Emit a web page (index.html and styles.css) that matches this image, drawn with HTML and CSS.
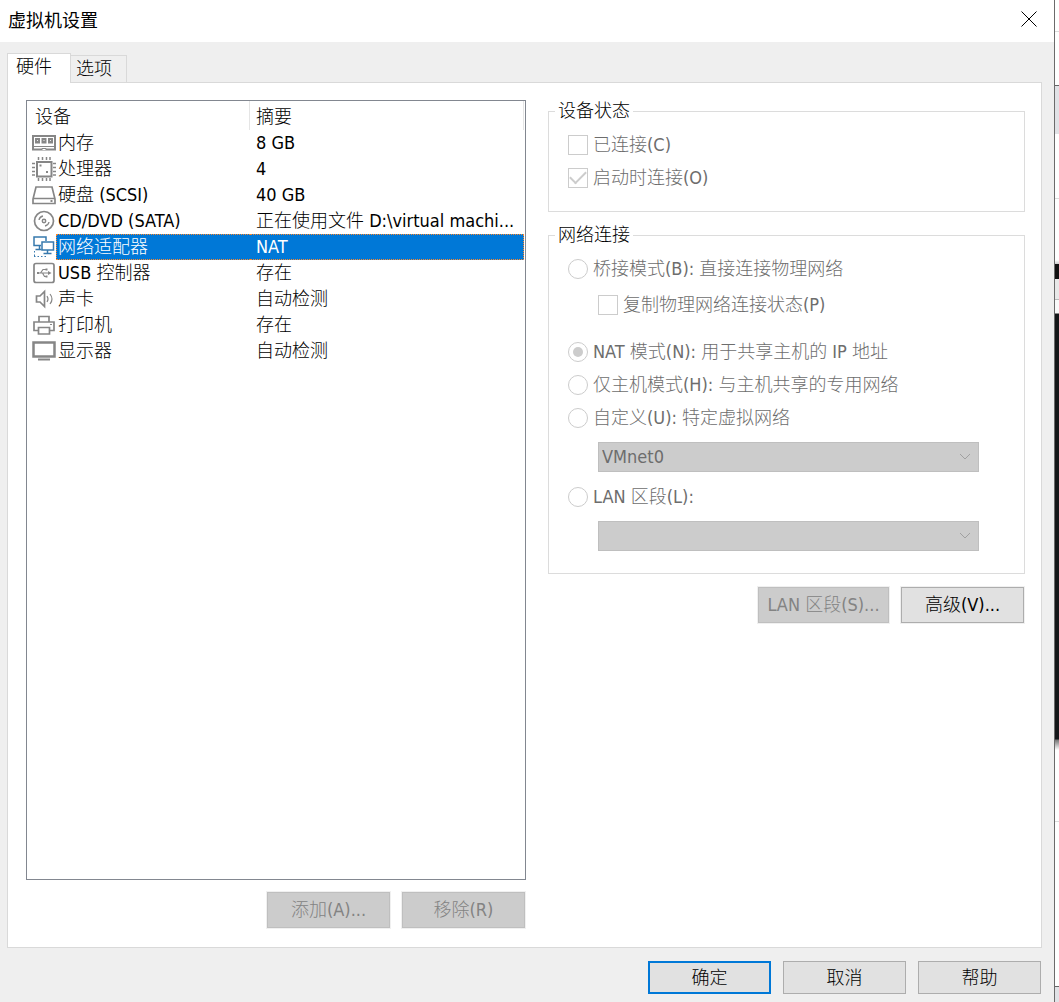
FILE: index.html
```html
<!DOCTYPE html>
<html lang="zh-CN">
<head>
<meta charset="utf-8">
<title>虚拟机设置</title>
<link rel="stylesheet" href="styles.css">
</head>
<body>
<main class="dialog">
  <header class="titlebar">
    <h1>虚拟机设置</h1>
    <button class="close" type="button" aria-label="关闭">
      <svg width="16" height="16" viewBox="0 0 16 16"><path d="M.5.5l15 15M15.500.5l-15 15" stroke="#000" fill="none"/></svg>
    </button>
  </header>

  <form class="content">
    <nav class="tabs" role="tablist">
      <button class="tab tab-active" type="button" role="tab" aria-selected="true">硬件</button>
      <button class="tab" type="button" role="tab" aria-selected="false">选项</button>
    </nav>

    <section class="panel">
      <div class="column">
        <div class="device-list">
          <table>
            <thead>
              <tr><th class="col-device">设备</th><th>摘要</th></tr>
            </thead>
            <tbody>
              <tr>
                <td><div class="device"><svg class="icon" viewBox="0 0 24 26"><path d="M1 6h22v13.500H1z" stroke-width="2"/><path d="M1 16.500h22" stroke-width="1"/><path d="M3 8h5v5.500H3zM9.500 8h5v5.500h-5zM16 8h5v5.500h-5z" fill="#868686" stroke="none"/><path d="M5 10.500h1M11.500 10.500h1M18 10.500h1" stroke="#eee"/><path d="M10 20v-1.500h4V20" fill="#fff"/></svg><span class="name">内存</span></div></td>
                <td>8 GB</td>
              </tr>
              <tr>
                <td><div class="device"><svg class="icon" viewBox="0 0 24 26"><path d="M5 6h14.500v14.500H5z" stroke-width="2"/><path d="M6.500 1v3M10.500 1v3M14.500 1v3M18 1v3M6.500 22v3M10.500 22v3M14.500 22v3M18 22v3M0 7.500h3M0 11.500h3M0 15.500h3M0 19h3M21 7.500h3M21 11.500h3M21 15.500h3M21 19h3" stroke-width="1.500"/><path d="M7.500 8.500h2v2h-2zM14 15h2v2h-2z" fill="#868686" stroke="none"/></svg><span class="name">处理器</span></div></td>
                <td>4</td>
              </tr>
              <tr>
                <td><div class="device"><svg class="icon" viewBox="0 0 24 26"><path d="M4 5h16l3 12v4.500H1V17zM1 16.500h22" stroke-width="1.700"/><path d="M18.500 19h2" stroke-width="2"/></svg><span class="name">硬盘 (SCSI)</span></div></td>
                <td>40 GB</td>
              </tr>
              <tr>
                <td><div class="device"><svg class="icon" viewBox="0 0 24 26"><circle cx="12" cy="13" r="9.500" stroke-width="1.700"/><circle cx="12" cy="13" r="1.700" stroke-width="1.500"/><path d="M7 12a5 5 0 0 1 4-4M17 14a5 5 0 0 1-4 4" stroke-width="1.300"/></svg><span class="name">CD/DVD (SATA)</span></div></td>
                <td>正在使用文件 D:\virtual machi...</td>
              </tr>
              <tr class="selected">
                <td><div class="device"><svg class="icon icon-net" viewBox="0 0 24 26"><path d="M9 11.500H2V3h12v4M7.500 12v3M3.500 15.500h6" stroke-width="1.500"/><path d="M10 8h11.500v8H10zM15.500 16v3M11.500 19.500h8" stroke-width="1.500"/><path d="M2.500 17v6M2 22.500h14" stroke-dasharray="1.500 2"/></svg><span class="name">网络适配器</span></div></td>
                <td>NAT</td>
              </tr>
              <tr>
                <td><div class="device"><svg class="icon" viewBox="0 0 24 26"><rect x="2" y="3.500" width="20" height="19" rx="2" stroke-width="1.700"/><path d="M6 13h11M8.500 13l2.500-3.500h3M10.500 13l2 3.500h2" stroke-width="1.200"/><path d="M16 11l3.500 2-3.500 2zM13.500 8.500h2v2h-2zM13.500 15.500h2v2h-2zM5 12h2v2H5z" fill="#868686" stroke="none"/></svg><span class="name">USB 控制器</span></div></td>
                <td>存在</td>
              </tr>
              <tr>
                <td><div class="device"><svg class="icon" viewBox="0 0 24 26"><path d="M4.500 10h3.500l4.500-4.500v15L8 16H4.500z" stroke-width="1.700"/><path d="M15 10q2 3 0 6M18 8q4 5 0 10" stroke-width="1.200"/></svg><span class="name">声卡</span></div></td>
                <td>自动检测</td>
              </tr>
              <tr>
                <td><div class="device"><svg class="icon" viewBox="0 0 24 26"><path d="M7 10V4.500h10V10M6 18.500H2V10h20v8.500h-4M6.500 15.500h11V22h-11z" stroke-width="1.700"/><path d="M18 12.500h2"/></svg><span class="name">打印机</span></div></td>
                <td>存在</td>
              </tr>
              <tr>
                <td><div class="device"><svg class="icon" viewBox="0 0 24 26"><path d="M1.500 4.500h21v14h-21z" stroke-width="2.500"/><path d="M6 21.500h12" stroke-width="2"/></svg><span class="name">显示器</span></div></td>
                <td>自动检测</td>
              </tr>
            </tbody>
          </table>
        </div>
        <div class="actions">
          <button class="btn" type="button" disabled>添加(A)...</button>
          <button class="btn" type="button" disabled>移除(R)</button>
        </div>
      </div>

      <div class="column">
        <fieldset class="group status">
          <legend>设备状态</legend>
          <label class="option"><input type="checkbox" disabled>已连接(C)</label>
          <label class="option"><input type="checkbox" checked disabled>启动时连接(O)</label>
        </fieldset>

        <fieldset class="group network">
          <legend>网络连接</legend>
          <label class="option"><input type="radio" name="mode" disabled>桥接模式(B): 直接连接物理网络</label>
          <label class="option replicate"><input type="checkbox" disabled>复制物理网络连接状态(P)</label>
          <label class="option"><input type="radio" name="mode" checked disabled>NAT 模式(N): 用于共享主机的 IP 地址</label>
          <label class="option"><input type="radio" name="mode" disabled>仅主机模式(H): 与主机共享的专用网络</label>
          <label class="option"><input type="radio" name="mode" disabled>自定义(U): 特定虚拟网络</label>
          <div class="picker">
            <select aria-label="特定虚拟网络" disabled><option>VMnet0</option></select>
            <svg width="12" height="8" viewBox="0 0 12 8"><path d="M1 1l5 5 5-5"/></svg>
          </div>
          <label class="option"><input type="radio" name="mode" disabled>LAN 区段(L):</label>
          <div class="picker">
            <select aria-label="LAN 区段" disabled><option></option></select>
            <svg width="12" height="8" viewBox="0 0 12 8"><path d="M1 1l5 5 5-5"/></svg>
          </div>
        </fieldset>

        <div class="actions network-actions">
          <button class="btn btn-wide" type="button" disabled>LAN 区段(S)...</button>
          <button class="btn" type="button">高级(V)...</button>
        </div>
      </div>
    </section>

    <footer class="footer">
      <button class="btn btn-default" type="button">确定</button>
      <button class="btn" type="button">取消</button>
      <button class="btn" type="button">帮助</button>
    </footer>
  </form>
</main>
<aside class="backdrop"></aside>
</body>
</html>
```
FILE: styles.css
```css
* { box-sizing: border-box; }

body {
  margin: 0;
  min-height: 100vh;
  display: grid;
  grid-template-columns: 1fr 4px;
  font: 18px/26px "DejaVu Sans Condensed", "Noto Sans CJK SC Light", "Noto Sans CJK SC", sans-serif;
  color: #000;
}

button, select { font: inherit; color: inherit; }

/* The slice of the window behind the dialog */
.backdrop {
  background: linear-gradient(#fff 31px, #ddd 31px 32px, #fff 32px 85px, #666 85px 86px, #e1e2e6 86px 134px, #fff 134px 198px, #ddd 198px 199px, #fff 199px 260px, #ccc 264px, #111 264px 279px, #e8e8e8 279px 299px, #bbb 299px 300px, #fafafa 300px 313px, #888 313px 314px, #151719 314px 739px, #777 740px, #fff 750px 821px, #ddd 821px 822px, #fff 822px 986px, #666 986px 987px, #e1e2e6 987px);
}

.dialog {
  display: flex;
  flex-direction: column;
  background: #efefef;
  border-right: 1px solid #6b6b6b;
}

.titlebar {
  height: 42px;
  padding: 0 17px 4px 8px;
  display: flex;
  align-items: center;
  justify-content: space-between;
  background: #fff;
}
.titlebar h1 {
  margin: 0;
  font: 18px/26px "Noto Sans CJK SC", sans-serif;
}
.close {
  display: flex;
  padding: 0;
  border: 0;
  background: none;
}

.content {
  flex: 1;
  display: flex;
  flex-direction: column;
  padding: 11px 12px 8px 7px;
}

.tabs {
  z-index: 1;
  display: flex;
  align-items: flex-end;
}
.tab {
  height: 27px;
  width: 56px;
  padding: 0 0 0 5px;
  text-align: left;
  border: 1px solid #d9d9d9;
  border-width: 1px 1px 0 0;
  background: #efefef;
}
.tab-active {
  height: 30px;
  width: 64px;
  margin-bottom: -1px;
  padding: 0 0 4px 8px;
  border-width: 1px 1px 0 1px;
  background: #fff;
}

.panel {
  flex: 1;
  display: grid;
  grid-template-columns: 500fr 477fr;
  gap: 22px;
  padding: 17px 16px 19px 18px;
  background: #fff;
  border: 1px solid #d9d9d9;
}

.column {
  display: flex;
  flex-direction: column;
  gap: 12px;
}

.device-list {
  flex: 1;
  border: 1px solid #828790;
  padding-right: 1px;
}
table {
  width: 100%;
  table-layout: fixed;
  border-collapse: separate;
  border-spacing: 0;
}
th {
  height: 29px;
  padding: 3px 0 0 6px;
  text-align: left;
  font-weight: inherit;
  line-height: 26px;
  border-right: 1px solid #e5e5e5;
}
.col-device {
  width: 223px;
  padding-left: 8px;
}
td {
  height: 26px;
  padding: 0 0 0 6px;
  white-space: nowrap;
}
td:first-child { padding-left: 5px; }
.device { display: flex; }
.icon {
  width: 24px;
  height: 26px;
  fill: none;
  stroke: #868686;
}
.icon-net { stroke: #3779ad; }
.name {
  flex: 1;
  padding-left: 2px;
}
.selected { color: #fff; }
.selected .name,
.selected td:last-child {
  height: 26px;
  line-height: 24px;
  background: #0078d7;
  border: 1px dotted #ff8728;
}
.selected .name {
  border-right: 0;
  padding-left: 1px;
}
.selected td:last-child { border-left: 0; }

.actions {
  display: flex;
  justify-content: flex-end;
  gap: 12px;
  padding-right: 1px;
}
.network-actions { padding-top: 1px; }
.btn {
  width: 123px;
  height: 36px;
  padding: 0;
  text-align: center;
  background: #e1e1e1;
  border: 1px solid #adadad;
}
.panel .btn { box-shadow: 0 0 0 1px #f0f0f0; }
.btn:disabled {
  color: #838383;
  background: #ccc;
  border-color: #bfbfbf;
}
.btn-wide { width: 131px; }
.btn-default { border: 2px solid #0078d7; }

.group {
  min-width: 0;
  margin: 0;
  border: 1px solid #dcdcdc;
}
.group legend {
  height: 22px;
  margin-left: -13px;
  padding: 0 3px;
  line-height: 22px;
}
.status { padding: 6px 19px 17px; }
.network { padding: 6px 45px 22px 19px; }

.option {
  height: 33px;
  display: flex;
  align-items: center;
  gap: 5px;
  color: #6d6d6d;
  white-space: nowrap;
}
.option input {
  appearance: none;
  width: 20px;
  height: 20px;
  margin: 0;
  display: grid;
  place-items: center;
  background: #fff;
  border: 1px solid #ccc;
}
.option input[type="radio"] { border-radius: 50%; }
.option input[type="radio"]:checked::before {
  content: "";
  width: 10px;
  height: 10px;
  border-radius: 50%;
  background: #ccc;
}
.option input[type="checkbox"]:checked::before {
  content: "";
  width: 14px;
  height: 7px;
  margin-bottom: 4px;
  border: solid #ccc;
  border-width: 0 0 2px 2px;
  transform: rotate(-45deg);
}
.replicate { margin: 3px 0 14px 30px; }

.picker {
  display: grid;
  grid-template-columns: 1fr 12px 8px;
  align-items: center;
  margin: 8px 0 8px 30px;
}
.picker:last-child { margin-bottom: 0; }
.picker select {
  grid-area: 1 / 1 / 2 / 4;
  appearance: none;
  height: 30px;
  padding: 0 3px;
  color: #6d6d6d;
  background: #ccc;
  border: 1px solid #bfbfbf;
  border-radius: 0;
  opacity: 1;
}
.picker svg {
  grid-area: 1 / 2;
  fill: none;
  stroke: #a0a0a0;
}

.footer {
  display: flex;
  justify-content: flex-end;
  gap: 12px;
  padding: 13px 1px 0 0;
}
.footer .btn { height: 33px; }
```
